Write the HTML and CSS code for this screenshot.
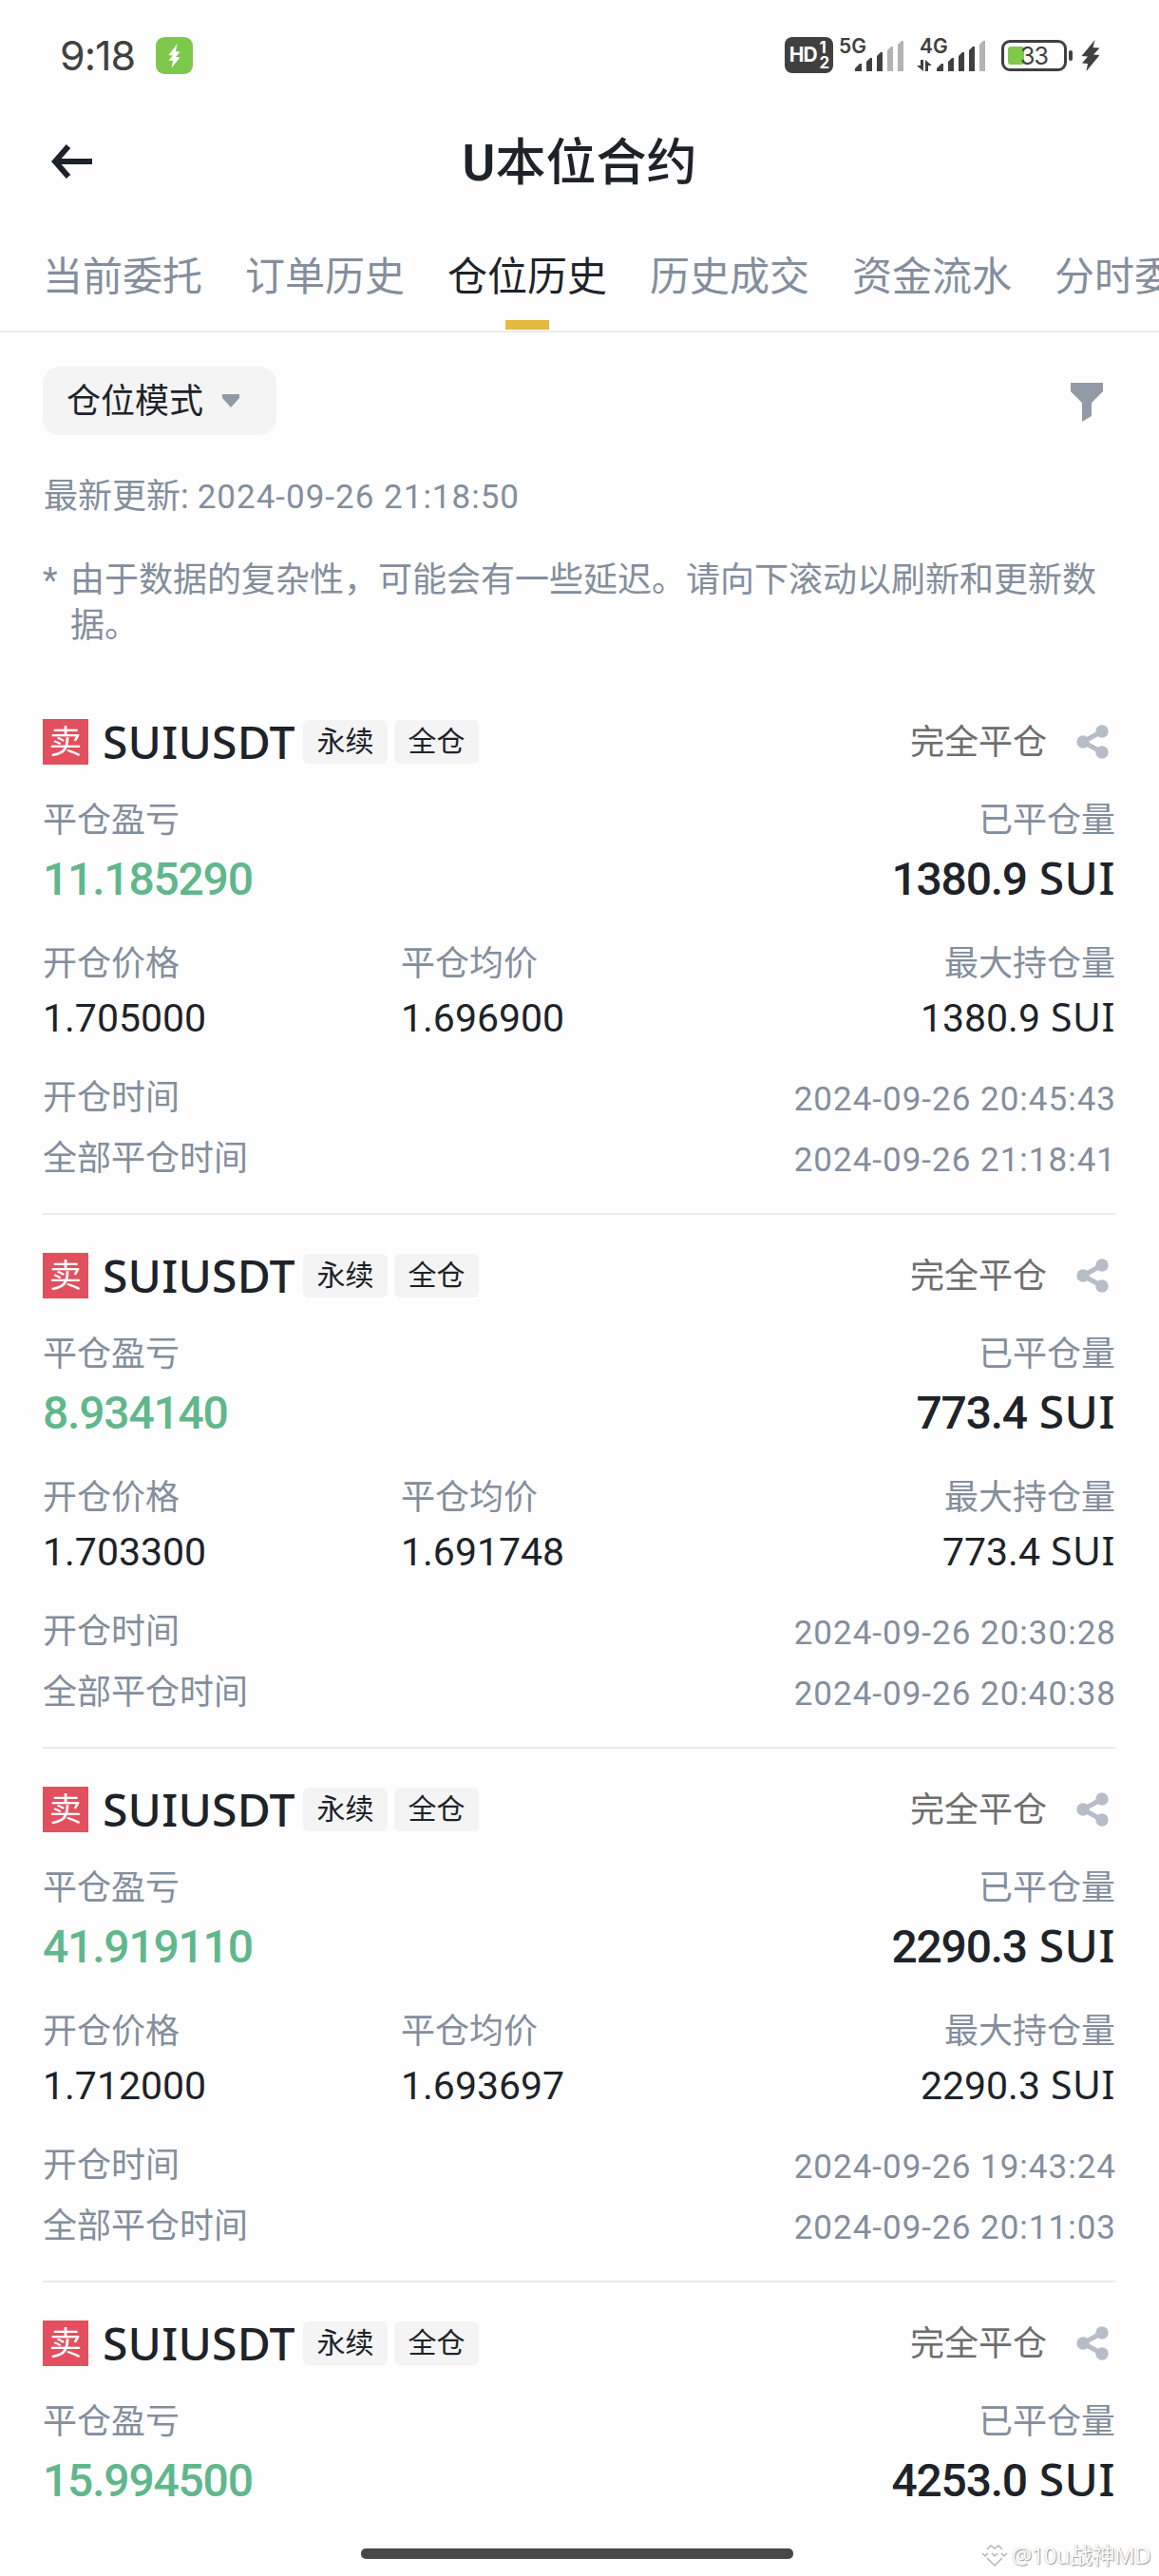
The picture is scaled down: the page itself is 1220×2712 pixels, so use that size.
FILE: index.html
```html
<!DOCTYPE html>
<html lang="zh-CN">
<head>
    <meta charset="UTF-8">
    <meta name="viewport" content="width=device-width, initial-scale=1.0">
    <title>U本位合约</title>
    <link rel="stylesheet" href="styles.css">
</head>
<body>
    <svg class="sprite" width="0" height="0">
        <symbol id="share" viewBox="0 0 34 36">
            <path d="M27 7 L7 18 L27 29" fill="none" stroke="currentColor" stroke-width="5"/>
            <circle cx="27" cy="7" r="6.7" fill="currentColor"/>
            <circle cx="7" cy="18" r="6.7" fill="currentColor"/>
            <circle cx="27" cy="29" r="6.7" fill="currentColor"/>
        </symbol>
    </svg>

    <div class="status-bar">
        <span class="clock">9:18</span>
        <span class="charge-badge">
            <svg width="39" height="39" viewBox="0 0 39 39"><path d="M22.500 7 L13.500 19 L18 19.500 L13.500 24.500 L18 25 L16.500 32.500 L25.500 21.500 L21 21 L25.500 15.500 L21 15 Z" fill="#fff"/></svg>
        </span>
        <div class="status-icons">
            <span class="hd">HD<span class="hd-nums"><i>1</i><i>2</i></span></span>
            <span class="signal signal-5g">
                <b>5G</b>
                <svg width="52" height="33" viewBox="0 0 52 33">
                    <g fill="#404040"><path d="M0 33V30L5 25H7V33Z"/><path d="M12 33V23L16 19H18V33Z"/><path d="M23 33V17L27 13H29V33Z"/></g>
                    <g fill="#b3b3b3"><path d="M34 33V11L38 7H40V33Z"/><path d="M45 33V5L49 1H51V33Z"/></g>
                </svg>
            </span>
            <span class="signal signal-4g">
                <b>4G</b>
                <svg width="73" height="33" viewBox="0 0 73 33">
                    <path d="M4 21H7V33L0 27H4ZM9 33V21L16 27H12V33Z" fill="#404040"/>
                    <g fill="#404040"><path d="M21 33V30L26 25H28V33Z"/><path d="M33 33V23L37 19H39V33Z"/><path d="M44 33V17L48 13H50V33Z"/><path d="M55 33V11L59 7H61V33Z"/></g>
                    <path d="M66 33V5L70 1H72V33Z" fill="#b3b3b3"/>
                </svg>
            </span>
            <span class="battery"><span class="level"></span><span class="percent">33</span></span>
            <span class="nub"></span>
            <svg class="bolt" width="20" height="33" viewBox="0 0 20 33"><path d="M14.500 0 L0.500 17 L7 17.500 L1 24.500 L7 25 L5.500 33 L19.500 16 L13 15.500 L19.500 8.500 L12.500 8 Z" fill="#404040"/></svg>
        </div>
    </div>

    <header class="title-bar">
        <svg class="back" width="44" height="36" viewBox="0 0 44 36"><path d="M18 2 L4 18 L18 34 M4 18 H43" fill="none" stroke="#1e2329" stroke-width="6"/></svg>
        <h1><span>U</span>本位合约</h1>
    </header>

    <nav class="tabs">
        <a>当前委托</a>
        <a>订单历史</a>
        <a class="active">仓位历史</a>
        <a>历史成交</a>
        <a>资金流水</a>
        <a>分时委托</a>
    </nav>

    <main class="content">
        <div class="toolbar">
            <button class="mode"><span>仓位模式</span>
                <svg width="18" height="14" viewBox="0 0 18 14"><path d="M0 0H18V4L9 14L0 4Z" fill="#929aa5"/></svg>
            </button>
            <svg class="filter" width="34" height="41" viewBox="0 0 34 41"><path d="M0 0H34V9L22 21V35L12 41V21L0 9Z" fill="#929aa5"/></svg>
        </div>
        <p class="updated">最新更新: <span class="date">2024-09-26 21:18:50</span></p>
        <p class="note"><span class="star">*</span><span>由于数据的复杂性，可能会有一些延迟。请向下滚动以刷新和更新数据。</span></p>

        <section class="card">
            <div class="card-head">
                <span class="side">卖</span>
                <span class="symbol">SUIUSDT</span>
                <span class="tag">永续</span>
                <span class="tag">全仓</span>
                <span class="state">完全平仓</span>
                <svg class="share" width="34" height="36"><use href="#share"/></svg>
            </div>
            <div class="row label pnl-label"><span>平仓盈亏</span><span>已平仓量</span></div>
            <div class="row big"><span class="profit">11.185290</span><span>1380.9 <span class="unit">SUI</span></span></div>
            <div class="grid label price-label"><span>开仓价格</span><span>平仓均价</span><span>最大持仓量</span></div>
            <div class="grid value"><span>1.705000</span><span>1.696900</span><span>1380.9 <span class="unit">SUI</span></span></div>
            <div class="row time open-time"><span>开仓时间</span><span class="date">2024-09-26 20:45:43</span></div>
            <div class="row time"><span>全部平仓时间</span><span class="date">2024-09-26 21:18:41</span></div>
        </section>

        <section class="card">
            <div class="card-head">
                <span class="side">卖</span>
                <span class="symbol">SUIUSDT</span>
                <span class="tag">永续</span>
                <span class="tag">全仓</span>
                <span class="state">完全平仓</span>
                <svg class="share" width="34" height="36"><use href="#share"/></svg>
            </div>
            <div class="row label pnl-label"><span>平仓盈亏</span><span>已平仓量</span></div>
            <div class="row big"><span class="profit">8.934140</span><span>773.4 <span class="unit">SUI</span></span></div>
            <div class="grid label price-label"><span>开仓价格</span><span>平仓均价</span><span>最大持仓量</span></div>
            <div class="grid value"><span>1.703300</span><span>1.691748</span><span>773.4 <span class="unit">SUI</span></span></div>
            <div class="row time open-time"><span>开仓时间</span><span class="date">2024-09-26 20:30:28</span></div>
            <div class="row time"><span>全部平仓时间</span><span class="date">2024-09-26 20:40:38</span></div>
        </section>

        <section class="card">
            <div class="card-head">
                <span class="side">卖</span>
                <span class="symbol">SUIUSDT</span>
                <span class="tag">永续</span>
                <span class="tag">全仓</span>
                <span class="state">完全平仓</span>
                <svg class="share" width="34" height="36"><use href="#share"/></svg>
            </div>
            <div class="row label pnl-label"><span>平仓盈亏</span><span>已平仓量</span></div>
            <div class="row big"><span class="profit">41.919110</span><span>2290.3 <span class="unit">SUI</span></span></div>
            <div class="grid label price-label"><span>开仓价格</span><span>平仓均价</span><span>最大持仓量</span></div>
            <div class="grid value"><span>1.712000</span><span>1.693697</span><span>2290.3 <span class="unit">SUI</span></span></div>
            <div class="row time open-time"><span>开仓时间</span><span class="date">2024-09-26 19:43:24</span></div>
            <div class="row time"><span>全部平仓时间</span><span class="date">2024-09-26 20:11:03</span></div>
        </section>

        <section class="card last">
            <div class="card-head">
                <span class="side">卖</span>
                <span class="symbol">SUIUSDT</span>
                <span class="tag">永续</span>
                <span class="tag">全仓</span>
                <span class="state">完全平仓</span>
                <svg class="share" width="34" height="36"><use href="#share"/></svg>
            </div>
            <div class="row label pnl-label"><span>平仓盈亏</span><span>已平仓量</span></div>
            <div class="row big"><span class="profit">15.994500</span><span>4253.0 <span class="unit">SUI</span></span></div>
        </section>
    </main>

    <div class="home-bar"></div>

    <div class="watermark">
        <svg width="28" height="24" viewBox="0 0 28 24"><path d="M6 6 L10 2 L14 5 L18 2 L22 6 M1 10 L4 13 L7 10 M11 10 L14 13 L17 10 M21 10 L24 13 L27 10 M6 15 L14 23 L22 15" fill="none" stroke="#b5b5b5" stroke-width="1.500"/></svg>
        <span>@10u战神MD</span>
    </div>
</body>
</html>
```
FILE: styles.css
```css
* {
    box-sizing: border-box;
}

body {
    position: relative;
    margin: 0;
    width: 1220px;
    height: 2712px;
    overflow: hidden;
    background: #fefefe;
    color: #1e2329;
    font-family: Roboto, "Noto Sans CJK SC", sans-serif;
}

h1, p {
    margin: 0;
    font-weight: 400;
}

svg {
    display: block;
    flex: none;
}

.sprite {
    position: absolute;
}

/* status bar */
.status-bar {
    display: flex;
    align-items: center;
    height: 116px;
    padding: 0 62px 0 63px;
    color: #404040;
}

.clock {
    width: 101px;
    font-family: Inter, Roboto, sans-serif;
    font-size: 43px;
    letter-spacing: -1px;
    line-height: 48px;
}

.charge-badge {
    width: 39px;
    height: 39px;
    border-radius: 9px;
    background: #7ec84b;
}

.status-icons {
    display: flex;
    align-items: center;
    margin-left: auto;
}

.hd {
    display: flex;
    align-items: center;
    justify-content: center;
    width: 51px;
    height: 38px;
    border-radius: 8px;
    background: #404040;
    color: #fff;
    font: 700 21px/38px Inter, sans-serif;
    letter-spacing: -1px;
}

.hd-nums {
    display: flex;
    flex-direction: column;
    margin-left: 3px;
    font-size: 17px;
    line-height: 16px;
}

.hd-nums i {
    font-style: normal;
}

.signal {
    position: relative;
    height: 33px;
}

.signal b {
    position: absolute;
    top: -4px;
    left: 0;
    font: 600 21px/22px Inter, sans-serif;
}

.signal-5g {
    margin-left: 6px;
    padding-left: 17px;
}

.signal-4g {
    margin-left: 13px;
}

.signal-4g b {
    left: 3px;
}

.battery {
    position: relative;
    width: 69px;
    height: 33px;
    margin-left: 16px;
    border: 3px solid #404040;
    border-radius: 9px;
}

.level {
    display: block;
    width: 17px;
    height: 19px;
    margin: 4px;
    border-radius: 3px;
    background: #7ec84b;
}

.percent {
    position: absolute;
    top: 1px;
    left: 17px;
    font: 400 25px/26px Inter, sans-serif;
    letter-spacing: -1px;
}

.nub {
    width: 4px;
    height: 11px;
    margin-left: 2px;
    border-radius: 2px;
    background: #404040;
}

.bolt {
    margin-left: 9px;
}

/* title */
.title-bar {
    display: grid;
    grid-template-columns: 44px 1fr 44px;
    align-items: center;
    height: 108px;
    padding: 0 54px;
}

h1 {
    padding-top: 4px;
    font-size: 53px;
    font-weight: 500;
    line-height: 60px;
    text-align: center;
}

h1 span {
    font-weight: 600;
}

.tabs {
    display: flex;
    gap: 45px;
    height: 126px;
    padding: 44px 0 0 45px;
    border-bottom: 2px solid #ebebeb;
    overflow: hidden;
}

.tabs a {
    position: relative;
    flex: none;
    color: #848e9c;
    font-size: 42px;
    line-height: 48px;
}

.tabs .active {
    color: #1e2329;
}

.tabs .active::after {
    content: "";
    position: absolute;
    left: 61px;
    top: 69px;
    width: 46px;
    height: 10px;
    background: #e5ba41;
}

.content {
    padding: 36px 46px 0 45px;
}

.toolbar {
    display: flex;
    align-items: center;
    justify-content: space-between;
    padding-right: 13px;
}

.mode {
    display: flex;
    align-items: center;
    gap: 20px;
    width: 246px;
    height: 72px;
    padding: 0 0 0 25px;
    border: 0;
    border-radius: 18px;
    background: #f4f4f4;
    color: #1e2329;
    font: 400 36px/48px Roboto, "Noto Sans CJK SC", sans-serif;
}

.mode span {
    padding-top: 2px;
}

.filter {
    margin-top: 3px;
}

.updated,
.note {
    color: #848e9c;
    font-size: 36px;
    line-height: 48px;
}

.updated {
    margin-top: 41px;
    padding-left: 1px;
}

.note {
    display: flex;
    margin: 39px 0 34px;
}

.star {
    flex: none;
    width: 29px;
}

.date {
    font-size: 35px;
    letter-spacing: 1px;
}

/* position cards */
.card {
    height: 562px;
    padding-top: 40px;
    border-bottom: 2px solid #ebebeb;
}

.card.last {
    height: auto;
    border-bottom: 0;
}

.card-head {
    display: flex;
    align-items: center;
    height: 48px;
}

.side {
    width: 48px;
    height: 48px;
    background: #e2505f;
    color: #fff;
    font-size: 34px;
    line-height: 48px;
    text-align: center;
}

.symbol {
    width: 211px;
    margin-left: 15px;
    font: 500 48px/48px "Noto Sans", sans-serif;
    letter-spacing: 0.2px;
}

.tag {
    width: 89px;
    height: 46px;
    margin-right: 7px;
    border-radius: 6px;
    background: #f4f4f4;
    font-size: 30px;
    line-height: 46px;
    text-align: center;
}

.state {
    margin-left: auto;
    padding-top: 2px;
    color: #6e6e6e;
    font-size: 36px;
    line-height: 48px;
}

.share {
    margin: 0 7px 0 31px;
    color: #b7bdc6;
}

.row {
    display: flex;
    justify-content: space-between;
}

.grid {
    display: grid;
    grid-template-columns: 377px 377px 1fr;
}

.grid span:nth-child(3) {
    text-align: right;
}

.label {
    color: #848e9c;
    font-size: 36px;
    line-height: 36px;
}

.pnl-label {
    margin-top: 41px;
}

.big {
    height: 48px;
    margin-top: 20px;
    font-size: 48px;
    font-weight: 500;
    line-height: 48px;
    letter-spacing: -1.2px;
    word-spacing: 2px;
}

.profit {
    color: #60b78c;
}

.unit {
    font-family: "Noto Sans", sans-serif;
    line-height: 0;
    letter-spacing: 0.5px;
}

.price-label {
    margin-top: 47px;
}

.value {
    height: 48px;
    margin-top: 15px;
    font-size: 41px;
    line-height: 48px;
    word-spacing: 1px;
}

.time {
    align-items: baseline;
    height: 48px;
    margin-top: 16px;
    color: #848e9c;
    font-size: 36px;
    line-height: 48px;
}

.time .date {
    position: relative;
    top: 1px;
    margin-right: -1px;
}

.open-time {
    margin-top: 36px;
}

.home-bar {
    position: absolute;
    left: 380px;
    bottom: 18px;
    width: 455px;
    height: 11px;
    border-radius: 5px;
    background: #484848;
}

.watermark {
    position: absolute;
    right: 9px;
    bottom: 6px;
    display: flex;
    align-items: center;
    gap: 4px;
    color: #fff;
    font: 24px/32px "Noto Sans", "Noto Sans CJK SC", sans-serif;
    letter-spacing: -0.6px;
    text-shadow: 1px 1px 1px #999, 0 0 1px #aaa;
}
```
